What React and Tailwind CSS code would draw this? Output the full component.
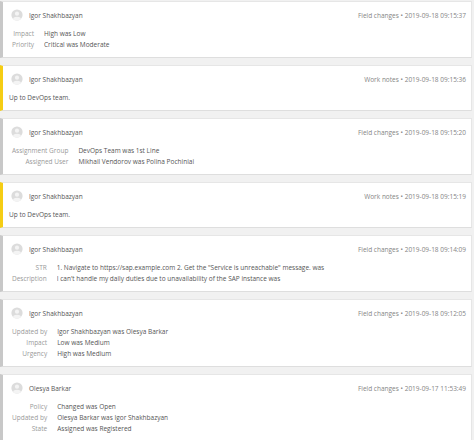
import React from 'react';

const entries = [
  {
    author: 'Igor Shakhbazyan',
    kind: 'Field changes',
    time: '2019-09-18 09:15:37',
    rows: [
      ['Impact', 'High was Low'],
      ['Priority', 'Critical was Moderate'],
    ],
  },
  { author: 'Igor Shakhbazyan', kind: 'Work notes', time: '2019-09-18 09:15:36', note: 'Up to DevOps team.' },
  {
    author: 'Igor Shakhbazyan',
    kind: 'Field changes',
    time: '2019-09-18 09:15:20',
    rows: [
      ['Assignment Group', 'DevOps Team was 1st Line'],
      ['Assigned User', 'Mikhail Vendorov was Polina Pochiniai'],
    ],
  },
  { author: 'Igor Shakhbazyan', kind: 'Work notes', time: '2019-09-18 09:15:19', note: 'Up to DevOps team.' },
  {
    author: 'Igor Shakhbazyan',
    kind: 'Field changes',
    time: '2019-09-18 09:14:09',
    rows: [
      ['STR', '1. Navigate to https://sap.example.com 2. Get the "Service is unreachable" message. was'],
      ['Description', "I can't handle my daily duties due to unavailability of the SAP instance was"],
    ],
  },
  {
    author: 'Igor Shakhbazyan',
    kind: 'Field changes',
    time: '2019-09-18 09:12:05',
    rows: [
      ['Updated by', 'Igor Shakhbazyan was Olesya Barkar'],
      ['Impact', 'Low was Medium'],
      ['Urgency', 'High was Medium'],
    ],
  },
  {
    author: 'Olesya Barkar',
    kind: 'Field changes',
    time: '2019-09-17 11:53:49',
    rows: [
      ['Policy', 'Changed was Open'],
      ['Updated by', 'Olesya Barkar was Igor Shakhbazyan'],
      ['State', 'Assigned was Registered'],
    ],
  },
];

const Avatar = () => (
  <svg width="12" height="12" viewBox="0 0 12 12" className="shrink-0">
    <defs>
      <clipPath id="av">
        <circle cx="6" cy="6" r="5.5" />
      </clipPath>
    </defs>
    <circle cx="6" cy="6" r="5.6" fill="#dcdcdc" />
    <g clipPath="url(#av)">
      <circle cx="6" cy="4.7" r="2.1" fill="#f4f4f4" />
      <ellipse cx="6" cy="11.2" rx="4.2" ry="3.4" fill="#f4f4f4" />
    </g>
  </svg>
);

const Entry = ({ entry }) => {
  const isNote = entry.kind === 'Work notes';
  return (
    <div
      className={`bg-white border border-[#e6e6e6] border-b-[#dedede] border-l-[3px] ${
        isNote ? 'border-l-[#f5cd14]' : 'border-l-[#c8c8c8]'
      } pl-[6px] pr-[5px] pt-[7px] pb-[7px]`}
    >
      <div className="flex items-center h-[12px]">
        <div className="ml-[2px]">
          <Avatar />
        </div>
        <span className="ml-[6px] text-[#555]">{entry.author}</span>
        <span className="ml-auto text-[#858585]">
          {entry.kind} • {entry.time}
        </span>
      </div>
      {isNote ? (
        <div className="mt-[7px] text-[#555]">{entry.note}</div>
      ) : (
        <div className="mt-[7px] ml-[3px] grid grid-cols-[auto_1fr] gap-x-[10px]">
          {entry.rows.map(([label, value], i) => (
            <React.Fragment key={i}>
              <span className="text-right text-[#999] whitespace-nowrap">{label}</span>
              <span className="text-[#555] whitespace-nowrap overflow-hidden">{value}</span>
            </React.Fragment>
          ))}
        </div>
      )}
    </div>
  );
};

export default function App() {
  return (
    <div
      className="w-[474px] h-[440px] overflow-hidden bg-[#f1f1f1] pt-px pr-[2px] flex flex-col gap-[7px] text-[6.5px] leading-[11px]"
      style={{ fontFamily: '"Open Sans", "Liberation Sans", sans-serif' }}
    >
      {entries.map((e, i) => (
        <Entry key={i} entry={e} />
      ))}
    </div>
  );
}
